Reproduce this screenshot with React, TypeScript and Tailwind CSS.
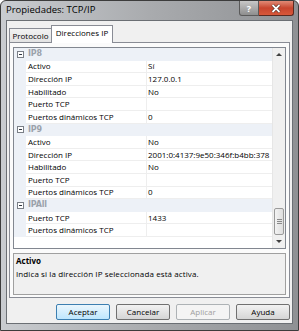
import React from "react";

type Row = { name: string; value: string };
type Section = { title: string; rows: Row[] };

const sections: Section[] = [
    {
        title: "IP8",
        rows: [
            { name: "Activo", value: "Sí" },
            { name: "Dirección IP", value: "127.0.0.1" },
            { name: "Habilitado", value: "No" },
            { name: "Puerto TCP", value: "" },
            { name: "Puertos dinámicos TCP", value: "0" },
        ],
    },
    {
        title: "IP9",
        rows: [
            { name: "Activo", value: "No" },
            { name: "Dirección IP", value: "2001:0:4137:9e50:346f:b4bb:378" },
            { name: "Habilitado", value: "No" },
            { name: "Puerto TCP", value: "" },
            { name: "Puertos dinámicos TCP", value: "0" },
        ],
    },
    {
        title: "IPAll",
        rows: [
            { name: "Puerto TCP", value: "1433" },
            { name: "Puertos dinámicos TCP", value: "" },
        ],
    },
];

const font = "font-['Segoe_UI','Open_Sans','Noto_Sans',sans-serif]";

function MinusBox() {
    return (
        <div className="w-[7px] h-[7px] border border-[#7a7f87] bg-white flex items-center justify-center">
            <div className="w-[3px] h-px bg-[#2f3540]" />
        </div>
    );
}

function Category({ title }: { title: string }) {
    return (
        <div className="h-[12.6px] flex items-center bg-[#edf1f7]">
            <div className="w-[12px] flex justify-center pl-[1px]">
                <MinusBox />
            </div>
            <span className="pl-[2px] text-[8px] font-bold text-[#9ba2ab] font-['DejaVu_Sans',sans-serif] tracking-[-0.2px] leading-none">{title}</span>
        </div>
    );
}

function PropRow({ row }: { row: Row }) {
    return (
        <div className="h-[12.6px] flex">
            <div className="w-[12px] bg-[#edf1f7] shrink-0" />
            <div className="w-[121px] shrink-0 border-b border-r border-[#eeeeee] flex items-center pl-[2px] text-[8px] leading-none whitespace-nowrap">
                {row.name}
            </div>
            <div className="flex-1 min-w-0 border-b border-[#eeeeee] flex items-center pl-[1px] text-[8px] leading-none whitespace-nowrap overflow-hidden">
                {row.value}
            </div>
        </div>
    );
}

function ScrollBar() {
    return (
        <div className="w-[13px] shrink-0 bg-[#f0f0f0] border-l border-[#e6e6e6] flex flex-col">
            <div className="h-[13px] flex items-center justify-center">
                <div className="w-0 h-0 border-l-[3px] border-r-[3px] border-b-[3px] border-l-transparent border-r-transparent border-b-[#404040]" />
            </div>
            <div className="flex-1 flex flex-col justify-end">
                <div className="mx-[1px] h-[27px] rounded-[2px] border border-[#9a9a9a] bg-gradient-to-r from-[#f3f3f3] to-[#dedede] flex flex-col items-center justify-center gap-[1px]">
                    <div className="w-[5px] h-px bg-[#8a8a8a]" />
                    <div className="w-[5px] h-px bg-[#8a8a8a]" />
                    <div className="w-[5px] h-px bg-[#8a8a8a]" />
                </div>
            </div>
            <div className="h-[13px] flex items-center justify-center">
                <div className="w-0 h-0 border-l-[3px] border-r-[3px] border-t-[3px] border-l-transparent border-r-transparent border-t-[#404040]" />
            </div>
        </div>
    );
}

function Button({ label, primary, disabled }: { label: string; primary?: boolean; disabled?: boolean }) {
    return (
        <div
            className={`w-[54px] h-[16px] rounded-[2px] border flex items-center justify-center text-[8px] leading-none ${
                primary
                    ? "border-[#3c7fb1] bg-gradient-to-b from-[#eaf6fd] to-[#bee6fd] text-black"
                    : disabled
                      ? "border-[#adb2b5] bg-[#f4f4f4] text-[#a0a0a0]"
                      : "border-[#707070] bg-gradient-to-b from-[#f2f2f2] to-[#d5d5d5] text-black"
            }`}
        >
            {label}
        </div>
    );
}

export default function App() {
    return (
        <div className={`w-[299px] h-[331px] bg-white ${font} text-black`}>
            <div className="w-full h-full rounded-t-[6px] border border-[#3c3c3c] bg-gradient-to-r from-[#c9ccd0] via-[#a9abae] to-[#8f9194] flex flex-col">
                {/* title bar */}
                <div className="h-[19px] flex items-start shrink-0">
                    <div className="pl-[5px] pt-[3px] text-[9.5px] leading-[12px] text-black">Propiedades: TCP/IP</div>
                    <div className="ml-auto mr-[4px] flex">
                        <div className="w-[20px] h-[15px] rounded-bl-[3px] border border-t-0 border-[#5a5a5a] bg-gradient-to-b from-[#c8c8c8] to-[#8e8e8e] flex items-center justify-center text-[9px] font-bold text-white leading-none">
                            ?
                        </div>
                        <div className="w-[35px] h-[15px] rounded-br-[3px] border border-t-0 border-l-0 border-[#5a2a20] bg-gradient-to-b from-[#e08a76] via-[#c7452e] to-[#d8583a] flex items-center justify-center">
                            <svg width="10" height="9" viewBox="0 0 10 9">
                                <path d="M1.5 1 L8.5 8 M8.5 1 L1.5 8" stroke="#3b1a12" strokeWidth="3" />
                                <path d="M1.5 1 L8.5 8 M8.5 1 L1.5 8" stroke="#ffffff" strokeWidth="1.8" />
                            </svg>
                        </div>
                    </div>
                </div>

                {/* client area */}
                <div className="mx-[5px] mb-[6px] flex-1 border border-[#6b6f74] bg-[#f0f0f0] flex flex-col">
                    {/* tabs */}
                    <div className="h-[21px] flex items-end pl-[2px] shrink-0">
                        <div className="h-[14px] w-[43px] border border-b-0 border-[#898c95] bg-gradient-to-b from-[#f2f2f2] to-[#e3e3e3] flex items-center justify-center text-[8px] leading-none">
                            Protocolo
                        </div>
                        <div className="h-[18px] w-[62px] -ml-px -mb-px border border-b-0 border-[#898c95] bg-white flex items-start pt-[3px] justify-center text-[8px] leading-none relative z-10">
                            Direcciones IP
                        </div>
                    </div>

                    {/* tab panel */}
                    <div className="mx-[2px] h-[256px] border border-[#898c95] bg-[#fbfbfb] px-[3px] pt-[4px] flex flex-col shrink-0">
                        {/* property grid */}
                        <div className="h-[202px] border border-[#828790] bg-white flex">
                            <div className="flex-1 min-w-0 flex flex-col overflow-hidden">
                                {sections.map((s) => (
                                    <div key={s.title}>
                                        <Category title={s.title} />
                                        {s.rows.map((r, i) => (
                                            <PropRow key={i} row={r} />
                                        ))}
                                    </div>
                                ))}
                            </div>
                            <ScrollBar />
                        </div>
                        {/* description */}
                        <div className="mt-[4px] h-[42px] border border-[#a0a0a0] bg-[#f0f0f0] px-[2px] pt-[2px] flex flex-col gap-[3px]">
                            <div className="text-[8px] font-bold leading-[10px]">Activo</div>
                            <div className="text-[8px] leading-[10px] whitespace-nowrap tracking-[0.1px]">Indica si la dirección IP seleccionada está activa.</div>
                        </div>
                    </div>

                    {/* buttons */}
                    <div className="flex-1 flex items-start justify-end pt-[6px] pr-[2px] gap-[6px]">
                        <Button label="Aceptar" primary />
                        <Button label="Cancelar" />
                        <Button label="Aplicar" disabled />
                        <Button label="Ayuda" />
                    </div>
                </div>
            </div>
        </div>
    );
}
